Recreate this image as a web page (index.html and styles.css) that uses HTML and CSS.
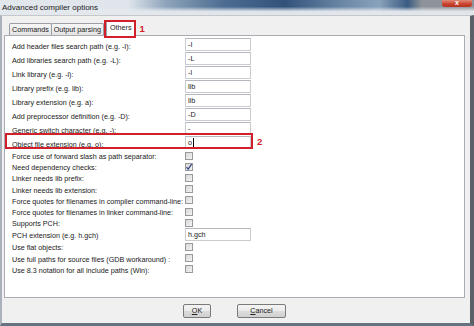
FILE: index.html
```html
<!DOCTYPE html>
<html>
<head>
<meta charset="utf-8">
<link rel="stylesheet" href="styles.css">
</head>
<body>
<div class="window">
  <div class="titlebar">
    <span class="title">Advanced compiler options</span>
    <span class="close">x</span>
  </div>
  <div class="frame">
    <div class="tabs">
      <div class="tab">Commands</div>
      <div class="tab">Output parsing</div>
      <div class="tab active">Others</div>
      <span class="mark">1</span>
    </div>
    <div class="panel">
      <div class="row text"><span class="label">Add header files search path (e.g. -I):</span><span class="input">-I</span></div>
      <div class="row text"><span class="label">Add libraries search path (e.g. -L):</span><span class="input">-L</span></div>
      <div class="row text"><span class="label">Link library (e.g. -l):</span><span class="input">-l</span></div>
      <div class="row text"><span class="label">Library prefix (e.g. lib):</span><span class="input">lib</span></div>
      <div class="row text"><span class="label">Library extension (e.g. a):</span><span class="input">lib</span></div>
      <div class="row text"><span class="label">Add preprocessor definition (e.g. -D):</span><span class="input">-D</span></div>
      <div class="row text"><span class="label">Generic switch character (e.g. -):</span><span class="input">-</span></div>
      <div class="row text highlight"><span class="label">Object file extension (e.g. o):</span><span class="input">o<span class="caret"></span></span><span class="mark">2</span></div>
      <div class="row check"><span class="label">Force use of forward slash as path separator:</span><span class="box"></span></div>
      <div class="row check"><span class="label">Need dependency checks:</span><span class="box"><svg viewBox="0 0 8 8" width="8" height="8"><path d="M1.5 4.2 L3.2 6.2 L6.6 1.2" fill="none" stroke="#3b4a86" stroke-width="1.3"/></svg></span></div>
      <div class="row check"><span class="label">Linker needs lib prefix:</span><span class="box"></span></div>
      <div class="row check"><span class="label">Linker needs lib extension:</span><span class="box"></span></div>
      <div class="row check"><span class="label">Force quotes for filenames in compiler command-line:</span><span class="box"></span></div>
      <div class="row check"><span class="label">Force quotes for filenames in linker command-line:</span><span class="box"></span></div>
      <div class="row check"><span class="label">Supports PCH:</span><span class="box"></span></div>
      <div class="row pch"><span class="label">PCH extension (e.g. h.gch)</span><span class="input">h.gch</span></div>
      <div class="row check"><span class="label">Use flat objects:</span><span class="box"></span></div>
      <div class="row check"><span class="label">Use full paths for source files (GDB workaround) :</span><span class="box"></span></div>
      <div class="row check"><span class="label">Use 8.3 notation for all include paths (Win):</span><span class="box"></span></div>
    </div>
    <div class="buttons">
      <div class="btn ok"><u>O</u>K</div>
      <div class="btn cancel"><u>C</u>ancel</div>
    </div>
  </div>
</div>
</body>
</html>
```
FILE: styles.css
```css
html, body {
  margin: 0;
  padding: 0;
  background: #5d7593;
}
.window {
  width: 474px;
  height: 326px;
  display: flex;
  flex-direction: column;
  font-family: "Liberation Sans", Arial, sans-serif;
  font-size: 7.2px;
  color: #202020;
  overflow: hidden;
}
.titlebar {
  height: 15px;
  flex: none;
  display: flex;
  align-items: flex-start;
  background:
    linear-gradient(to bottom, rgba(230,234,238,0) 0, rgba(230,234,238,0) 45%, rgba(228,233,238,0.95) 75%, #e4e8ec 100%),
    linear-gradient(to right, #e2e7ec 0, #dfe5eb 27%, #8ea4bb 35%, #4d6d92 47%, #32527b 60%, #6a86a6 72%, #8aa2bc 80%, #3a5b82 86%, #8d9399 89%, #8d9399 93%, #8d9399 100%);
}
.title {
  font-size: 8px;
  color: #1a1a1a;
  padding: 3px 0 0 2px;
  line-height: 9px;
}
.close {
  margin-left: auto;
  margin-right: 2px;
  width: 30px;
  height: 7px;
  background: linear-gradient(to bottom, #e08a78, #c8402c 60%, #b83422);
  border-radius: 0 0 3px 3px;
  color: #fff;
  font-size: 7px;
  line-height: 6px;
  text-align: center;
  font-weight: bold;
}
.frame {
  flex: 1;
  background: #f0f0f0;
  border-top: 1px solid #c4c8cc;
  border-left: 2px solid #a9b1ba;
  border-right: 4px solid #5b6168;
  border-bottom: 3px solid #66727f;
  padding: 7px 5px 0 2px;
  display: flex;
  flex-direction: column;
}
.tabs {
  height: 12px;
  display: flex;
  align-items: flex-end;
  padding-left: 5px;
  position: relative;
  z-index: 1;
}
.tab {
  height: 11px;
  line-height: 11px;
  padding: 0 2px;
  border: 1px solid #9a9ea5;
  border-bottom: none;
  background: linear-gradient(to bottom, #f6f6f6, #e4e4e4);
  border-radius: 2px 2px 0 0;
  margin-right: -1px;
  white-space: nowrap;
}
.tab.active {
  height: 15px;
  line-height: 13px;
  margin-bottom: -1px;
  margin-left: 3px;
  padding: 0 3px;
  background: #fff;
  position: relative;
}
.tab.active::after {
  content: "";
  position: absolute;
  left: -3px;
  right: -2px;
  top: -1px;
  bottom: -2px;
  border: 2px solid #d21f2c;
}
.mark {
  color: #d21f2c;
  font-size: 9.5px;
  font-weight: bold;
  line-height: 10px;
  margin-left: 5px;
  align-self: center;
}
.panel {
  height: 263px;
  box-sizing: border-box;
  background: #fff;
  border: 1px solid #a9acb2;
  padding: 2px 0 0 7px;
  display: flex;
  flex-direction: column;
}
.row {
  display: flex;
  align-items: center;
  flex: none;
}
.row.text { height: 14px; }
.row.check { height: 11.2px; }
.row.pch { height: 13px; }
.label {
  width: 173px;
  flex: none;
  white-space: nowrap;
  padding-top: 2px;
}
.input {
  width: 66px;
  height: 13px;
  box-sizing: border-box;
  border: 1px solid #c9ccd1;
  border-top-color: #b4b7bd;
  padding-left: 2px;
  line-height: 11px;
  background: #fff;
  display: flex;
  align-items: center;
}
.row.text .input { align-self: flex-start; }
.caret {
  display: inline-block;
  width: 0;
  height: 9px;
  border-left: 1px solid #000;
  margin-left: 1px;
}
.row.highlight {
  position: relative;
}
.row.highlight::after {
  content: "";
  position: absolute;
  left: -7px;
  top: -3px;
  width: 244px;
  height: 12px;
  border: 2px solid #d21f2c;
}
.row.highlight .mark {
  margin-left: 6px;
  margin-top: -3px;
}
.box {
  width: 8px;
  height: 8px;
  box-sizing: border-box;
  border: 1px solid #9a9a9a;
  background: linear-gradient(135deg, #d8d8d8, #f4f4f4);
  display: flex;
  align-items: center;
  justify-content: center;
}
.box svg {
  flex: none;
}
.buttons {
  display: flex;
  justify-content: center;
  gap: 26px;
  padding-top: 6px;
}
.btn {
  height: 14px;
  box-sizing: border-box;
  border: 1px solid #7a7a7a;
  border-radius: 2px;
  background: linear-gradient(to bottom, #f4f4f4 0, #ebebeb 48%, #dcdcdc 52%, #d0d0d0 100%);
  text-align: center;
  line-height: 12px;
}
.btn.ok { width: 28px; }
.btn.cancel { width: 49px; }
```
